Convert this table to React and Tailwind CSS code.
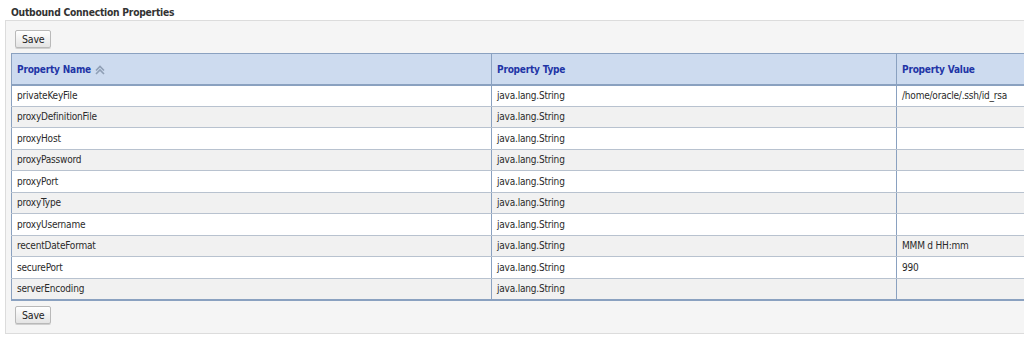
import React from "react";

const rows = [
  ["privateKeyFile", "java.lang.String", "/home/oracle/.ssh/id_rsa"],
  ["proxyDefinitionFile", "java.lang.String", ""],
  ["proxyHost", "java.lang.String", ""],
  ["proxyPassword", "java.lang.String", ""],
  ["proxyPort", "java.lang.String", ""],
  ["proxyType", "java.lang.String", ""],
  ["proxyUsername", "java.lang.String", ""],
  ["recentDateFormat", "java.lang.String", "MMM d HH:mm"],
  ["securePort", "java.lang.String", "990"],
  ["serverEncoding", "java.lang.String", ""],
];

function SaveButton() {
  return (
    <button className="block ml-[4px] h-[18px] px-[6px] text-[10.5px] tracking-[-0.2px] leading-none text-[#222] border border-[#b9b9b9] rounded-[2px] bg-gradient-to-b from-[#ffffff] to-[#e4e4e4] shadow-[0_1px_0_#d0d0d0]">
      Save
    </button>
  );
}

function SortIcon() {
  return (
    <svg width="12" height="10" viewBox="0 0 12 10" className="ml-[3px]">
      <path d="M2 5.5 L6 1.5 L10 5.5" fill="none" stroke="#8f9fb5" strokeWidth="1.6" />
      <path d="M2 9 L6 5 L10 9" fill="none" stroke="#8f9fb5" strokeWidth="1.6" />
    </svg>
  );
}

const cellBase = "border-l border-[#8aa1c0] pl-[5px] pt-[1px] ";
const thBase =
  "border-t border-l border-b-2 border-[#8aa1c0] text-left pl-[5px] pt-[3px] font-bold text-[#1f35a6]";

export default function App() {
  return (
    <div
      className="w-[1024px] h-[340px] overflow-hidden bg-white text-[#2a2a2a]"
      style={{ fontFamily: '"DejaVu Sans Condensed", "Liberation Sans", Arial, sans-serif' }}
    >
      <div className="pl-[11px] pt-[5px] h-[20px] text-[10.25px] tracking-[-0.25px] font-bold text-[#333] leading-[14px]">
        Outbound Connection Properties
      </div>
      <div className="ml-[5px] w-[1100px] h-[314px] border border-[#dcdcdc] bg-[#f5f5f5] pl-[5px] pt-[9px]">
        <SaveButton />
        <table className="mt-[5px] w-[1060px] table-fixed border-collapse text-[10px] tracking-[-0.2px] leading-none">
          <colgroup>
            <col className="w-[480px]" />
            <col className="w-[405px]" />
            <col />
          </colgroup>
          <thead>
            <tr className="h-[31px] bg-[#cddbef]">
              <th className={thBase}>
                <span className="inline-flex items-center">
                  Property Name
                  <SortIcon />
                </span>
              </th>
              <th className={thBase}>Property Type</th>
              <th className={thBase}>Property Value</th>
            </tr>
          </thead>
          <tbody>
            {rows.map((r, i) => {
              const last = i === rows.length - 1;
              const b = last
                ? "border-b-2 border-b-[#8aa1c0]"
                : "border-b border-b-[#b8c2cf]";
              return (
                <tr
                  key={r[0]}
                  className={
                    (i % 2 === 0 ? "bg-white" : "bg-[#f1f1f1]") +
                    " " +
                    (last ? "h-[22px]" : "h-[21.5px]")
                  }
                >
                  <td className={cellBase + b}>{r[0]}</td>
                  <td className={cellBase + b}>{r[1]}</td>
                  <td className={cellBase + b}>{r[2]}</td>
                </tr>
              );
            })}
          </tbody>
        </table>
        <div className="mt-[5px]">
          <SaveButton />
        </div>
      </div>
    </div>
  );
}
